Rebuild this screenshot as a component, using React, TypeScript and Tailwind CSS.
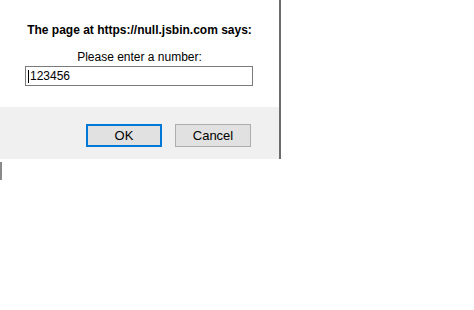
export default function App() {
  return (
    <div className="w-[474px] h-[310px] bg-white overflow-hidden" style={{ fontFamily: '"Liberation Sans", Arial, sans-serif' }}>
      <div className="w-[281px] border-r-2 border-[#6b6b6b] flex flex-col">
        <div className="h-[107px] bg-white flex flex-col items-center">
          <div className="mt-[23px] text-[12px] font-bold text-black leading-[14px]">The page at https://null.jsbin.com says:</div>
          <div className="mt-[13px] text-[12px] text-black leading-[14px]">Please enter a number:</div>
          <div className="mt-[2px] ml-[25px] self-start w-[228px] h-[20px] border border-[#7a7a7a] flex items-center pl-[2px] text-[12px] text-black leading-none">
            <span className="w-px h-[13px] bg-black mr-px" />
            123456
          </div>
        </div>
        <div className="h-[52px] bg-[#f0f0f0] flex items-start pt-[17px] pl-[86px] gap-[13px]">
          <button className="w-[76px] h-[23px] border-2 border-[#0078d7] bg-[#e1e1e1] text-[13px] text-black flex items-center justify-center">OK</button>
          <button className="w-[76px] h-[23px] border border-[#adadad] bg-[#e1e1e1] text-[13px] text-black flex items-center justify-center">Cancel</button>
        </div>
      </div>
      <div className="mt-[3px] w-[2px] h-[18px] bg-[#8a8a8a]" />
    </div>
  );
}
